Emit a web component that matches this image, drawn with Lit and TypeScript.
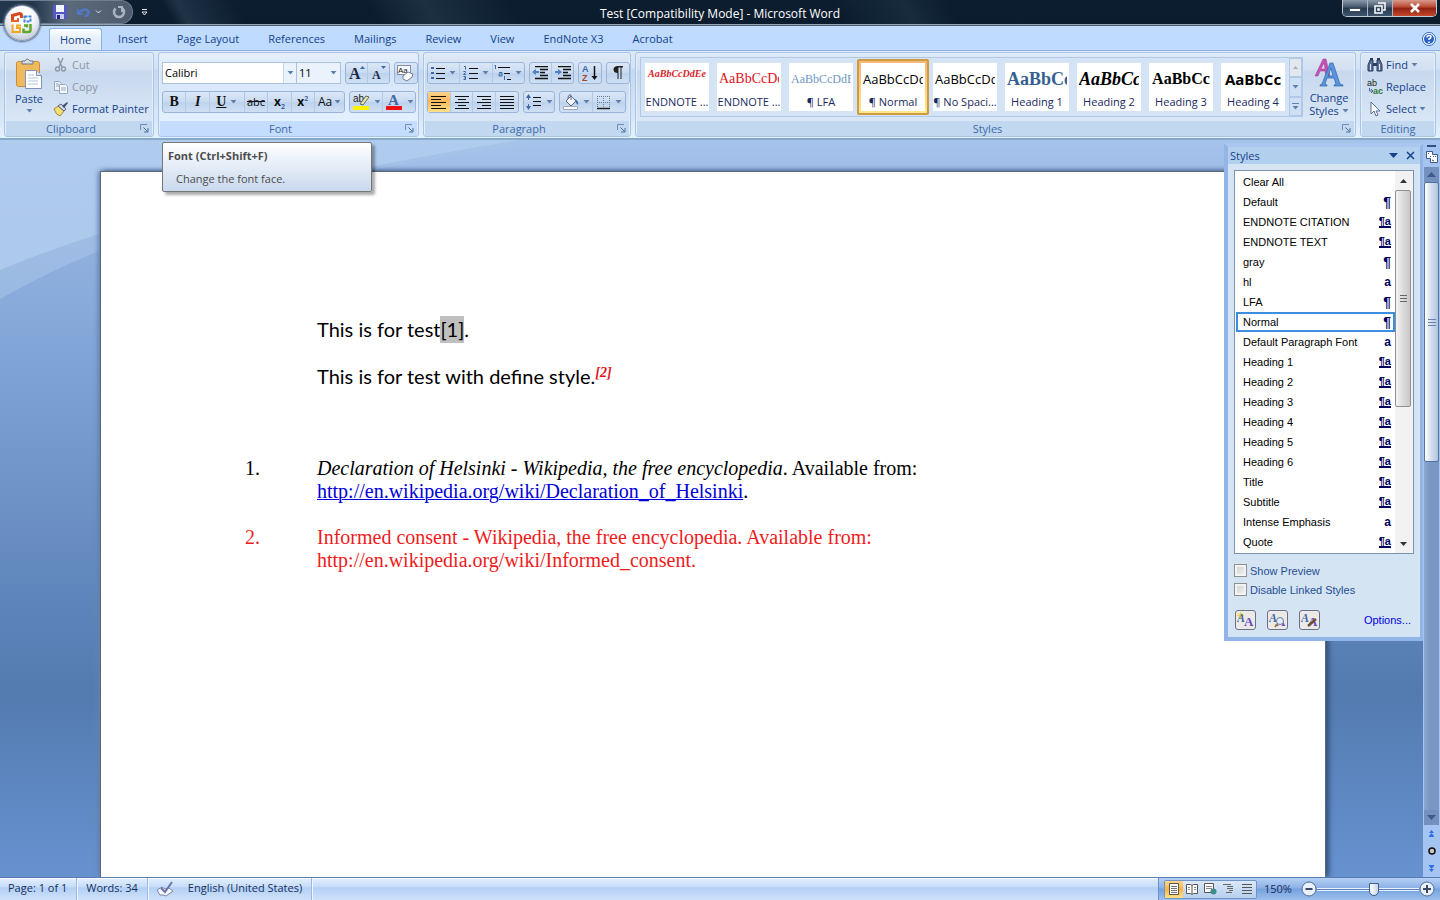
import { LitElement, html, css, svg, nothing } from "lit";
import { customElement, state } from "lit/decorators.js";
import { classMap } from "lit/directives/class-map.js";

const icon = (w: number, h: number, body: unknown) =>
  html`<svg class="icon" width=${w} height=${h} viewBox="0 0 ${w} ${h}" aria-hidden="true">${body}</svg>`;

const caret = icon(7, 4, svg`<path d="M0.500 0h6L3.500 3.500z" fill="#5f7fae"/>`);
const launcher = icon(9, 9, svg`<path d="M0.500 6V0.500H7" fill="none" stroke="#6f8db8"/><path d="M3.500 3.500l4 4M8 4v4H4" fill="none" stroke="#4d6c9c"/>`);

const lines = (rows: [number, number][], h = 14) =>
  icon(16, h, rows.map(([x, w], i) => svg`<path d="M${x} ${i * 3 + 1}.5h${w}" stroke="#111"/>`));

const icons = {
  office: icon(26, 26, svg`
    <path d="M3.500 11V5.500l7-2q2 0 2 2V8" fill="none" stroke="#d9471c" stroke-width="3"/>
    <path d="M2 11h7V8" fill="none" stroke="#e8642a" stroke-width="2"/>
    <path d="M3.500 14.500V22H11v-4H8v-2.500h4" fill="none" stroke="#f0a81e" stroke-width="2"/>
    <path d="M15.500 6.500h6v5h-6z" fill="none" stroke="#3f86d6" stroke-width="2" stroke-dasharray="3 1"/>
    <path d="M15 15.500h3v2M21.500 14v6q0 2-2 2h-5v-3.500" fill="none" stroke="#5fa62c" stroke-width="2.500"/>`),
  save: icon(14, 14, svg`<path d="M0 0h14v14H1.500L0 12.500z" fill="#5558c4"/><path d="M3 0h8v7H3z" fill="#f3f5ff"/><path d="M3 9h8v5H3z" fill="#c9cdf2"/><path d="M4 10h3v4H4z" fill="#25286f"/>`),
  undo: icon(13, 13, svg`<path d="M3 5.500q6-4 8.500 0 0.500 4-4 5" fill="none" stroke="#5078c8" stroke-width="2.500"/><path d="M0 2v7h6z" fill="#5078c8"/>`),
  redo: icon(14, 14, svg`<path d="M3.500 3.500a5 5 0 1 0 7 0" fill="none" stroke="#a9b4c1" stroke-width="2.500"/><path d="M6 1h5v6H9V3H6z" fill="#a9b4c1"/>`),
  paste: icon(28, 31, svg`
    <rect x="1.500" y="3.500" width="23" height="25" rx="2" fill="#f0b95c" stroke="#c98b35"/>
    <path d="M7 6V3h3q2-4 5 0h3v3z" fill="#d9dde4" stroke="#6d7686"/>
    <path d="M10.500 12.500h11l5 5v13h-16z" fill="#fff" stroke="#7d93bb"/><path d="M21.500 12.500v5h5" fill="#d9e4f6" stroke="#7d93bb"/>
    <path d="M13 17h6M13 20h10M13 23h10M13 26h10" stroke="#b4c4de"/>`),
  cut: icon(16, 16, svg`<path d="M5 1l4 9M10 1L6 10" stroke="#8e99a9" stroke-width="1.500"/><circle cx="4.500" cy="12" r="2" fill="none" stroke="#8e99a9" stroke-width="1.500"/><circle cx="10.500" cy="12" r="2" fill="none" stroke="#8e99a9" stroke-width="1.500"/>`),
  copy: icon(16, 16, svg`<path d="M1.500 2.500h5l2 2v7h-7z" fill="#eef3fa" stroke="#98a8bf"/><path d="M6.500 5.500h6l2 2v7h-8z" fill="#f6f9fd" stroke="#98a8bf"/><path d="M3 5h3M3 7h3M8 9h5M8 11h5" stroke="#98a8bf"/>`),
  painter: icon(16, 16, svg`<path d="M1 8l4-3 6 5-4 5q-4-1-6-7z" fill="#f4dd73" stroke="#a48a34"/><path d="M5 5l3-2 5 5-2 2z" fill="#d6d9e6" stroke="#5b5f7c"/><path d="M9 5l5-4 1 1-4 5z" fill="#4b4f78"/>`),
  grow: icon(18, 18, svg`<text x="1" y="15" font-size="16" class="gb">A</text><path d="M12 5l2.500-3L17 5z" fill="#3f68a8"/>`),
  shrink: icon(18, 18, svg`<text x="2" y="15" font-size="12" class="gb">A</text><path d="M11 2h5l-2.500 3z" fill="#3f68a8"/>`),
  clear: icon(18, 18, svg`<rect x="0.500" y="1.500" width="13" height="9" fill="#f7f9fc" stroke="#8290a8"/><text x="1" y="9" font-size="8" class="gs">Aa</text><path d="M6 12l5-4 5 2-1 3-5 4-4-2z" fill="#fbfbfd" stroke="#777f91"/>`),
  highlight: icon(18, 18, svg`<text x="1" y="9" font-size="10" class="gs">ab</text><path d="M8 11l6-8 3 1-6 8z" fill="#e9e3b4" stroke="#646a50"/><path d="M1 13h16v4H1z" fill="#fff200"/>`),
  fontColor: icon(18, 18, svg`<text x="3" y="12" font-size="15" class="gb blue">A</text><path d="M1 13h16v4H1z" fill="#ef1111"/>`),
  bullets: icon(14, 14, svg`<path d="M0 1h3v2H0zM0 6h3v2H0zM0 11h3v2H0z" fill="#3f68a8"/><path d="M5 2.500h9M5 7.500h9M5 12.500h9" stroke="#111"/>`),
  numbers: icon(15, 14, svg`<path d="M1 0.500h1.500v3M0.500 5.500h2v1l-2 2h2.500M0.500 10.500h2v3h-2M1 12h1.500" fill="none" stroke="#3f68a8"/><path d="M6 2.500h9M6 7.500h9M6 12.500h9" stroke="#111"/>`),
  levels: icon(17, 16, svg`<path d="M1.500 0v4M0.500 0.500h1.500M5 7.500h3v3.500h-3v-2h3M10.500 11v4" fill="none" stroke="#3f68a8"/><path d="M4 2.500h12M10 8.500h6M13 14.500h4" stroke="#111"/>`),
  outdent: icon(17, 14, svg`<path d="M0 6l4-3v2h3v2H4v2z" fill="#4f7fc4"/><path d="M3 0.500h13M8 3.500h8M8 6.500h5M8 9.500h8M3 12.500h13" stroke="#111" stroke-width="1.500"/>`),
  indent: icon(17, 14, svg`<path d="M7 6L3 3v2H0v2h3v2z" fill="#4f7fc4"/><path d="M3 0.500h13M8 3.500h8M8 6.500h5M8 9.500h8M3 12.500h13" stroke="#111" stroke-width="1.500"/>`),
  sort: icon(16, 16, svg`<text x="0" y="7" font-size="9" class="gs blue bold">A</text><text x="0" y="16" font-size="9" class="gs rust bold">Z</text><path d="M12.500 1v12" stroke="#111" stroke-width="1.500"/><path d="M9.500 11h6l-3 4z" fill="#111"/>`),
  pilcrow: icon(12, 14, svg`<path d="M5 0h6v1.500H5z" fill="#222"/><path d="M6 0v7Q1.500 7 1.500 3.500T6 0z" fill="#222"/><path d="M6 1v12M9 1v12" stroke="#222"/>`),
  left: lines([[0, 15], [0, 10], [0, 15], [0, 10], [0, 15]], 15),
  center: lines([[1, 14], [4, 8], [1, 14], [4, 8], [1, 14]], 15),
  right: lines([[1, 14], [6, 9], [1, 14], [6, 9], [1, 14]], 15),
  justify: lines([[1, 14], [1, 14], [1, 14], [1, 14], [1, 14]], 15),
  spacing: icon(16, 16, svg`<path d="M2.500 2v4M2.500 10v4" stroke="#3f68a8"/><path d="M0 4l2.500-4L5 4zM0 12l2.500 4L5 12z" fill="#3f68a8"/><path d="M7 3.500h8M7 7.500h8M7 11.500h8" stroke="#111"/>`),
  shading: icon(17, 16, svg`<path d="M4 7l5-5 5 5-5 5z" fill="#f5f7fb" stroke="#5a6a8a"/><path d="M6 5q0-5 3-4v5" fill="none" stroke="#5a6a8a"/><path d="M13 5q4 2 3 6l-2-2z" fill="#3f68a8"/><path d="M1.500 12.500h14v3h-14z" fill="#fff" stroke="#9aa9c0"/>`),
  borders: icon(15, 15, svg`<path d="M1.500 1v12M7.500 1v12M13.500 1v12M1 1.500h12M1 7.500h12" stroke="#6a7c9c" stroke-dasharray="1 1"/><path d="M1 13.500h13" stroke="#222" stroke-width="1.500"/>`),
  change: icon(30, 29, svg`<path d="M1 18L9 1h3l4 17h-4l-1-5H6l-2 5zM7 11h4l-1-6z" fill="#c94fb4" stroke="#96408c" stroke-width="0.500" fill-rule="evenodd"/><path d="M6 27l2-1L16 5h3l7 21 3 1v1h-9v-1l2-1-2-6h-7l-2 6 2 1v1H6zM14 18h5l-2-8z" fill="#5a94dc" stroke="#2f64ae" stroke-width="0.700" fill-rule="evenodd"/>`),
  find: icon(16, 16, svg`<path d="M1 8l2-5h3v11H1zM15 8l-2-5h-3v11h5z" fill="#5d7196" stroke="#2b3c63"/><path d="M6 6h4v3H6zM3 1h3v2H3zM10 1h3v2h-3z" fill="#2b3c63"/><path d="M3.500 7v6M12.500 7v6" stroke="#d9e4f6"/>`),
  replace: icon(16, 16, svg`<text x="0" y="7" font-size="9" class="gs">ab</text><path d="M2.500 9v3h3M4 10l2 2-2 2" fill="none" stroke="#3f68a8"/><text x="6" y="15" font-size="9" class="gs green bold">ac</text>`),
  select: icon(16, 16, svg`<path d="M4 1v12l3-3 2 5 2-1-2-4h4z" fill="#fff" stroke="#5b6f94"/>`),
  help: icon(14, 14, svg`<circle cx="7" cy="7" r="6.500" fill="#fff" stroke="#3565b8"/><circle cx="7" cy="7" r="5" fill="#2b62c9"/><path d="M5 5.500q0-2 2-2t2 1.500q0 1-2 2v1M7 9.500v1.500" fill="none" stroke="#fff" stroke-width="1.500"/>`),
  proof: icon(18, 16, svg`<path d="M1 9l5-3 3 2 4-1 4 3-7 5-3-1-3 0z" fill="#f3f5fa" stroke="#7c88a6"/><path d="M5 7l4 4 7-10" fill="none" stroke="#6674a8" stroke-width="2"/>`),
  ruler: icon(12, 12, svg`<path d="M0.500 0.500h6v3h5v8h-7v-4h-4z" fill="#fff" stroke="#3c5a8c"/><path d="M2 2.500h1M4 5.500h1M7 5.500h1M9 5.500h1M6 9l2 1" stroke="#3c5a8c"/>`),
};

const tabs = ["Home", "Insert", "Page Layout", "References", "Mailings", "Review", "View", "EndNote X3", "Acrobat"];

const gallery = [
  { cls: "p-cite", sample: "AaBbCcDdEe", name: "ENDNOTE ..." },
  { cls: "p-note", sample: "AaBbCcDd", name: "ENDNOTE ..." },
  { cls: "p-lfa", sample: "AaBbCcDdEe", name: "¶ LFA" },
  { cls: "p-normal", sample: "AaBbCcDd", name: "¶ Normal", on: true },
  { cls: "p-normal", sample: "AaBbCcDd", name: "¶ No Spaci..." },
  { cls: "p-h1", sample: "AaBbCc", name: "Heading 1" },
  { cls: "p-h2", sample: "AaBbCc", name: "Heading 2" },
  { cls: "p-h3", sample: "AaBbCc", name: "Heading 3" },
  { cls: "p-h4", sample: "AaBbCc", name: "Heading 4" },
];

type Kind = "" | "p" | "l" | "c";
const styleList: [string, Kind][] = [
  ["Clear All", ""], ["Default", "p"], ["ENDNOTE CITATION", "l"], ["ENDNOTE TEXT", "l"], ["gray", "p"], ["hl", "c"],
  ["LFA", "p"], ["Normal", "p"], ["Default Paragraph Font", "c"], ["Heading 1", "l"], ["Heading 2", "l"], ["Heading 3", "l"],
  ["Heading 4", "l"], ["Heading 5", "l"], ["Heading 6", "l"], ["Title", "l"], ["Subtitle", "l"], ["Intense Emphasis", "c"], ["Quote", "l"],
];
const marks = { "": "", p: "¶", l: "¶a", c: "a" };

@customElement("app-root")
export class AppRoot extends LitElement {
  @state() private current = "Normal";

  static styles = css`
    :host { display: flex; flex-direction: column; height: 100vh; overflow: hidden; font: 11px/16px "Open Sans", "Noto Sans", sans-serif; color: #15428b; position: relative; }
    * { box-sizing: border-box; }
    button, input, select { font: inherit; color: inherit; margin: 0; }
    button { background: none; border: 0; padding: 0; display: flex; align-items: center; justify-content: center; white-space: nowrap; }
    .icon { display: block; flex: none; }
    .gb { font-family: "Liberation Serif", serif; font-weight: bold; fill: #1d2b45; }
    .gs { font-family: "Liberation Sans", sans-serif; fill: #222; }
    .bold { font-weight: bold; }
    .blue { fill: #3f68a8; }
    .violet { fill: #6a4ac0; }
    .rust { fill: #a8452c; }
    .green { fill: #2d7a34; }

    .titlebar { display: grid; grid-template-columns: 1fr auto 1fr; height: 26px; flex: none; color: #fff; font-size: 12px; border-bottom: 2px ridge #8ea5bb;
      background: linear-gradient(60deg, transparent 0 12%, #1f3346 13%, transparent 17%, transparent 26%, #1c3042 30%, transparent 36%, transparent 58%, #172b3d 63%, transparent 66%), linear-gradient(#0c1d2f, #0a1c2e); }
    .titlebar h1 { font: inherit; margin: 0; line-height: 27px; }
    .quick { display: flex; align-items: flex-start; gap: 8px; }
    .pill { display: flex; align-items: center; gap: 10px; height: 24px; width: 133px; padding-left: 53px; border-radius: 0 12px 12px 0; background: linear-gradient(90deg, #22374b 25%, #5c6a7c 50%, #4d5b6d); border: 1px solid #6f7f92; border-left: 0; }
    .quick > button { height: 25px; }
    .pill button:nth-child(2) { gap: 5px; }
    .window { justify-self: end; display: flex; height: 17px; margin-right: 3px; border: 1px solid #c0cbd6; border-top: 0; border-radius: 0 0 5px 5px; overflow: hidden; }
    .window button { width: 25px; background: linear-gradient(#8b99aa, #44566b 45%, #24384e 50%, #3d556e); border-right: 1px solid #a8b6c4; }
    .window .close { width: 43px; border: 0; background: linear-gradient(#d99a8b, #b8452f 45%, #8f2011 50%, #c5492b); }
    .orb { position: absolute; left: 4px; top: 5px; width: 36px; height: 36px; border-radius: 50%; border: 1px solid #8b9bb2; background: radial-gradient(circle at 50% 30%, #fff 30%, #dfe4ec 60%, #aab6c8); box-shadow: 0 0 2px 1px #51637a; z-index: 2; }

    .tabs { display: flex; gap: 1px; height: 24px; flex: none; padding: 2px 4px 0 49px; background: #bfdbff; }
    .tabs button { padding: 0 14px; }
    .tabs .on { border: 1px solid #8db2e3; border-bottom: 0; border-radius: 3px 3px 0 0; background: linear-gradient(#fff, #e8f1fb 40%, #dfeaf8); padding: 0 10px; margin-right: 1px; }
    .tabs .help { margin-left: auto; padding: 0; }

    .ribbon { display: flex; gap: 4px; flex: none; padding: 1px 4px; height: 90px; background: linear-gradient(#dce9f8, #d3e3f5 20%, #c6d9ef 22%, #d9e8f8 80%, #e3f1ff); border-top: 1px solid #8db2e3; border-bottom: 2px solid #86a9c9; }
    .group { display: flex; flex-direction: column; border: 1px solid #a9c4e4; border-radius: 3px; box-shadow: inset 0 0 0 1px #e2eefb; background: linear-gradient(#dee9f6, #d3e0f1 20%, #c8d8ed 22%, #d8e6f6 80%); }
    .group.hot { background: linear-gradient(#e6f0fc, #dce9f9 20%, #d4e4f8 22%, #e2f0ff 80%); }
    .group.hot footer { background: #c4ddfe; }
    .group.grow { flex: 1; min-width: 0; }
    .body { display: flex; flex: 1; min-height: 0; }
    .group footer { display: flex; height: 15px; line-height: 15px; margin: 0 1px; background: #c1d8f0; color: #3e6aaa; text-align: center; align-items: center; }
    .group footer span { flex: 1; }
    .group footer button { width: 16px; }
    .clip { width: 150px; } .font { width: 261px; } .para { width: 208px; } .edit { width: 76px; }
    .big { flex-direction: column; justify-content: flex-start; width: 48px; line-height: 12px; padding-top: 5px; gap: 4px; }
    .change { width: 52px; line-height: 13px; }
    .change .with { display: flex; align-items: center; gap: 3px; }
    .change .words { display: flex; flex-direction: column; align-items: center; }
    .stack { display: flex; flex-direction: column; justify-content: center; }
    .edit .stack { padding-left: 6px; }
    .stack button { justify-content: flex-start; gap: 3px; height: 22px; }
    .stack button:disabled { color: #8d96a6; }
    .rows { display: flex; flex-direction: column; gap: 7px; padding: 9px 3px 0; }
    .row { display: flex; gap: 4px; height: 22px; }
    .set { display: flex; border: 1px solid #9bb5d8; border-radius: 3px; background: linear-gradient(#dae7f7, #c9daf0 50%, #bdd2ed 52%, #cfe0f5); }
    .set button { min-width: 22px; gap: 4px; color: #111; border-right: 1px solid #b4c9e6; flex: 1; font-size: 12px; }
    .set button:last-child { border: 0; }
    .set .serif { font-family: "Liberation Serif", serif; font-weight: bold; font-size: 14px; }
    .set .it { font-style: italic; }
    .set .un span { text-decoration: underline; }
    .set .st { font-size: 11px; text-decoration: line-through; }
    .set .on { background: linear-gradient(#fbd38b, #fcb95a 45%, #ffe18a); }
    .w24 { width: 24px; } .w32 { width: 32px; } .w44 { width: 45px; } .w67 { width: 67px; } .w92 { width: 92px; } .w98 { width: 98px; } .w183 { width: 183px; }
    .set .wide { flex: 0 0 35px; }
    .set .mid { flex: 0 0 29px; gap: 2px; }
    .set sub, .set sup { font-size: 7px; color: #3f68a8; line-height: 0; }
    .combos { display: flex; }
    .combo { display: grid; border: 1px solid #abc1de; background: #fff; color: #000; }
    .combo > * { grid-area: 1 / 1; }
    .combo select { appearance: none; border: 0; background: none; padding: 0 2px; outline: 0; min-width: 0; }
    .combo .drop { justify-self: end; width: 13px; display: grid; place-items: center; border-left: 1px solid #c5d7ef; background: #eaf2fb; pointer-events: none; }
    .cname { width: 135px; }
    .csize { width: 44px; border-left: 0; background: #eaf2fb; }
    .csize .drop { border: 0; }

    .gallery { display: flex; flex: 1; min-width: 0; margin: 4px 0 4px 4px; border: 1px solid #b0c9e8; background: #d4e4f5; }
    .card { flex: 0 0 72px; flex-direction: column; padding: 5px 4px; color: #00004d; }
    .card > span { display: block; width: 64px; height: 24px; background: #fff; overflow: hidden; text-align: center; line-height: 30px; border: 0 solid #fff; border-width: 0 2px; }
    .card > .name { line-height: 30px; color: #1a2a5e; border-width: 0; }
    .card.on { border: 2px solid #cf9a43; border-radius: 2px; padding: 2px; background: linear-gradient(#f3b877, #ffe88a); margin: 1px 0; }
    .card > .p-cite { font: italic bold 10px/22px "Liberation Serif", serif; color: #d8232a; }
    .card > .p-note { font: 14px/32px "Liberation Serif", serif; color: #e0131b; }
    .card > .p-lfa { font: 12px/32px "Liberation Serif", serif; color: #6f97c6; }
    .card > .p-normal { font-size: 13px; line-height: 32px; color: #000; }
    .card > .p-h1 { font: bold 18px/32px "Liberation Serif", serif; color: #365f91; }
    .card > .p-h2 { font: italic bold 18px/32px "Liberation Serif", serif; color: #000; }
    .card > .p-h3 { font: bold 16px/32px "Liberation Serif", serif; color: #000; }
    .card > .p-h4 { font-weight: bold; font-size: 15px; line-height: 32px; color: #000; }
    .steps { display: flex; flex-direction: column; width: 14px; margin-left: auto; }
    .steps button { flex: 1; border: 1px solid #b0c9e8; background: #cfe0f4; }
    .steps button:disabled { background: #e3e8ee; }

    .workspace { flex: 1; min-height: 0; display: flex; position: relative; background: linear-gradient(#a6c3ec, #96b5e1 10%, #86a9da 24%, #7398cb 42%, #5f86bc 62%, #537bb0 75%, #6792d0); }
    .swoosh { position: absolute; left: 0; top: 0; }
    .desk { flex: 1; min-width: 0; padding: 31px 97px 0 100px; position: relative; display: flex; overflow: hidden; }
    .page { flex: 1; min-width: 0; background: #fff; border: 1px solid #5d6878; border-bottom: 0; box-shadow: 3px 0 5px #33507c, -2px 0 5px #6686b3; padding: 144px 216px 0 144px; color: #000; }
    .page p { margin: 0 0 20px 72px; font: 20px/27px Lato, sans-serif; }
    .page mark { background: #c0c0c0; color: inherit; display: inline-block; }
    .page sup { font: italic bold 14px/0 "Liberation Serif", serif; color: #e0131b; vertical-align: 7px; }
    .refs { margin: 67px 0 0; font: 20px/23px "Liberation Serif", serif; display: grid; grid-template-columns: 72px 1fr; row-gap: 23px; }
    .refs dt, .refs dd { margin: 0; }
    .refs .red { color: #ee1c1c; }
    .refs a { color: #0000d8; text-decoration-thickness: 1px; }

    .tip { position: absolute; left: 162px; top: 2px; width: 210px; height: 50px; padding: 5px; border: 1px solid #767676; border-radius: 2px; background: linear-gradient(#fff, #c9d9ee); box-shadow: 3px 3px 3px #00000055; color: #4c4c4c; line-height: 16px; z-index: 3; }
    .tip strong { display: block; margin-bottom: 7px; }
    .tip span { padding-left: 8px; }

    .pane { position: absolute; right: 17px; top: 3px; width: 199px; border: 4px solid #93b4e6; border-top-color: #a9c7ef; border-right-width: 3px; background: #d5e4f2; font: 11px/20px "Liberation Sans", sans-serif; z-index: 2; }
    .pane header { display: flex; align-items: center; height: 17px; padding: 0 5px 0 2px; background: #b3cfee; gap: 8px; font-family: "Open Sans", sans-serif; }
    .pane header span { margin-right: auto; }
    .listbox { display: flex; height: 384px; margin: 6px 6px 0; border: 1px solid #7c93ad; background: #fff; color: #000; }
    .list { flex: 1; min-width: 0; overflow: hidden; padding: 1px 0 0 1px; }
    .list button { width: 100%; height: 20px; padding: 0 2px 0 5px; justify-content: space-between; border: 2px solid transparent; }
    .list .on { border-color: #3d8de0; }
    .kind { font: bold 12px/12px "Liberation Sans", sans-serif; color: #00005c; }
    .kind.l { border-bottom: 2px solid #00005c; line-height: 9px; font-size: 11px; }
    .kind.p { font-size: 14px; }
    .bar { width: 18px; padding-right: 2px; display: flex; flex-direction: column; background: #f2f2f2; }
    .bar i { display: grid; place-items: center; height: 19px; }
    .bar b { height: 217px; border: 1px solid #8f8f8f; border-radius: 2px; background: linear-gradient(90deg, #f5f5f5, #dcdcdc 50%, #c8c8c8); display: grid; place-items: center; }
    .bar i:last-child { margin-top: auto; }
    .checks { padding: 7px 6px 0; color: #1f4e94; }
    .checks label { display: flex; align-items: center; gap: 3px; height: 19px; }
    .checks input { appearance: none; width: 13px; height: 13px; border: 1px solid #8d8f91; background: linear-gradient(135deg, #c9ccd0, #f6f6f6); box-shadow: inset 0 0 0 2px #f4f4f4; }
    .tools { display: flex; gap: 11px; padding: 11px 9px 7px 7px; align-items: center; }
    .tools button { width: 21px; height: 20px; border: 1px solid #6b6f8b; border-radius: 3px; background: #eceae6; }
    .tools a { margin-left: auto; color: #0000e0; text-decoration: none; }

    .vscroll { width: 17px; flex: none; display: flex; flex-direction: column; align-items: center; background: #a6c4f2; padding-top: 5px; }
    .vscroll .split { width: 9px; height: 2px; background: #33507e; margin-bottom: 4px; }
    .vscroll .rule { margin-bottom: 4px; }
    .rail { flex: 1; min-height: 0; align-self: stretch; margin: 0 1px; display: flex; flex-direction: column; background: linear-gradient(90deg, #8fa9d0, #7896c4 40%, #7a97c4); }
    .rail button { height: 15px; background: #7390bf; }
    .rail b { height: 280px; border: 1px solid #54709d; border-radius: 2px; background: linear-gradient(90deg, #fff, #d5e0f0 45%, #b2c4e0); display: grid; place-items: center; }
    .rail button:last-child { margin-top: auto; }
    .browse { height: 52px; display: flex; flex-direction: column; justify-content: space-around; align-items: center; }

    .status { display: flex; height: 23px; flex: none; color: #15305f; border-top: 1px solid #567db0; background: linear-gradient(#e3efff, #c7dcf9 40%, #b3d0f5 45%, #cfe2fb); box-shadow: inset 0 1px 0 #fff; line-height: 20px; }
    .status > span, .status > button { padding: 0 9px; border-right: 1px solid #9ab8e0; box-shadow: 1px 0 0 #f0f7ff; }
    .status > span:first-child { padding-left: 8px; }
    .status > .lang { padding-left: 0; }
    .status > .check { border: 0; box-shadow: none; padding: 0 14px 0 8px; }
    .zoom { display: flex; align-items: center; margin-left: auto; padding: 0 5px; border-left: 1px solid #6a94cf; background: linear-gradient(#b5d0f5, #8db2e6 45%, #76a1dd 50%, #9cc0ee); }
    .views { display: flex; height: 19px; width: 93px; border: 1px solid #6f94c8; border-radius: 2px; background: linear-gradient(#dbe8f9, #b7cfee); margin-right: 7px; }
    .views button { flex: 1; }
    .views .on { background: linear-gradient(#ffd68c, #fdb53f 50%, #ffe18a); }
    .zoom label { width: 37px; }
    .zoom input { appearance: none; flex: none; width: 102px; height: 18px; background: linear-gradient(#5a80b5, #5a80b5) center / 100% 1px no-repeat, linear-gradient(#e8f2ff, #e8f2ff) center / 100% 3px no-repeat; }
    .zoom input::-webkit-slider-thumb { appearance: none; width: 10px; height: 13px; border: 1px solid #3f5f92; background: linear-gradient(90deg, #fff, #c7d6ea); border-radius: 1px 1px 5px 5px; }
  `;

  private group(label: string, cls: string, body: unknown, launch = true) {
    return html`<section class="group ${cls}"><div class="body">${body}</div>
      <footer><span>${label}</span>${launch ? html`<button aria-label="${label} dialog">${launcher}</button>` : nothing}</footer></section>`;
  }

  private galleryCard(g: (typeof gallery)[number]) {
    return html`<button class=${classMap({ card: true, on: !!g.on })}><span class=${g.cls}>${g.sample}</span><span class="name">${g.name}</span></button>`;
  }

  private ribbon() {
    return html`<div class="ribbon">
      ${this.group("Clipboard", "clip", html`
        <button class="big">${icons.paste}<span>Paste</span>${caret}</button>
        <div class="stack">
          <button disabled>${icons.cut}Cut</button><button disabled>${icons.copy}Copy</button><button>${icons.painter}Format Painter</button>
        </div>`)}
      ${this.group("Font", "font hot", html`<div class="rows">
        <div class="row">
          <div class="combos">
            <div class="combo cname"><select aria-label="Font"><option>Calibri</option></select><span class="drop">${caret}</span></div>
            <div class="combo csize"><select aria-label="Font size"><option>11</option></select><span class="drop">${caret}</span></div>
          </div>
          <div class="set w44"><button aria-label="Grow font">${icons.grow}</button><button aria-label="Shrink font">${icons.shrink}</button></div>
          <div class="set w24"><button aria-label="Clear formatting">${icons.clear}</button></div>
        </div>
        <div class="row">
          <div class="set w183">
            <button class="serif">B</button><button class="serif it">I</button><button class="serif un wide"><span>U</span>${caret}</button>
            <button class="st">abc</button><button class="bold"><span>x<sub>2</sub></span></button><button class="bold"><span>x<sup>2</sup></span></button>
            <button class="mid">Aa${caret}</button>
          </div>
          <div class="set w67"><button aria-label="Highlight">${icons.highlight}${caret}</button><button aria-label="Font color">${icons.fontColor}${caret}</button></div>
        </div></div>`)}
      ${this.group("Paragraph", "para", html`<div class="rows">
        <div class="row">
          <div class="set w98"><button aria-label="Bullets">${icons.bullets}${caret}</button><button aria-label="Numbering">${icons.numbers}${caret}</button><button aria-label="Multilevel list">${icons.levels}${caret}</button></div>
          <div class="set w44"><button aria-label="Decrease indent">${icons.outdent}</button><button aria-label="Increase indent">${icons.indent}</button></div>
          <div class="set w24"><button aria-label="Sort">${icons.sort}</button></div>
          <div class="set w24"><button aria-label="Show marks">${icons.pilcrow}</button></div>
        </div>
        <div class="row">
          <div class="set w92"><button class="on" aria-label="Align left">${icons.left}</button><button aria-label="Center">${icons.center}</button><button aria-label="Align right">${icons.right}</button><button aria-label="Justify">${icons.justify}</button></div>
          <div class="set w32"><button aria-label="Line spacing">${icons.spacing}${caret}</button></div>
          <div class="set w67"><button aria-label="Shading">${icons.shading}${caret}</button><button aria-label="Borders">${icons.borders}${caret}</button></div>
        </div></div>`)}
      ${this.group("Styles", "grow", html`
        <div class="gallery">${gallery.map((g) => this.galleryCard(g))}
          <div class="steps">
            <button disabled aria-label="Previous row">${icon(5, 3, svg`<path d="M0 3h5L2.500 0z" fill="#a5adb8"/>`)}</button>
            <button aria-label="Next row">${caret}</button>
            <button aria-label="More">${icon(7, 7, svg`<path d="M0 0.500h7" stroke="#5f7fae"/><path d="M0.500 3h6L3.500 6.500z" fill="#5f7fae"/>`)}</button>
          </div>
        </div>
        <button class="big change">${icons.change}<span class="words"><span>Change</span><span class="with">Styles${caret}</span></span></button>`)}
      ${this.group("Editing", "edit", html`<div class="stack">
        <button>${icons.find}<span>Find</span>${caret}</button><button>${icons.replace}<span>Replace</span></button><button>${icons.select}<span>Select</span>${caret}</button></div>`, false)}
    </div>`;
  }

  private stylePane() {
    const aa = svg`<text x="0" y="10" font-size="12" font-style="italic" class="gb blue">A</text><text x="7" y="14" font-size="13" class="gb violet">A</text>`;
    return html`<aside class="pane">
      <header><span>Styles</span>
        <button aria-label="Pane menu">${icon(9, 5, svg`<path d="M0 0h9L4.500 5z" fill="#15428b"/>`)}</button>
        <button aria-label="Close pane">${icon(9, 9, svg`<path d="M1 1l7 7M8 1L1 8" stroke="#15428b" stroke-width="1.500"/>`)}</button></header>
      <div class="listbox">
        <div class="list">${styleList.map(([n, k]) => html`<button class=${classMap({ on: n === this.current })} @click=${() => (this.current = n)}><span>${n}</span>${k ? html`<span class="kind ${k}">${marks[k]}</span>` : nothing}</button>`)}</div>
        <div class="bar"><i>${icon(7, 4, svg`<path d="M0 4h7L3.500 0z" fill="#333"/>`)}</i><b>${icon(7, 9, svg`<path d="M0 1.500h7M0 4.500h7M0 7.500h7" stroke="#666"/>`)}</b><i>${icon(7, 4, svg`<path d="M0 0h7L3.500 4z" fill="#333"/>`)}</i></div>
      </div>
      <div class="checks"><label><input type="checkbox">Show Preview</label><label><input type="checkbox">Disable Linked Styles</label></div>
      <div class="tools">
        <button aria-label="New style">${icon(17, 16, svg`<path d="M1 1l5 5M6 1L1 6M3.500 0v7M0 3.500h7" stroke="#efd23c"/>${aa}`)}</button>
        <button aria-label="Style inspector">${icon(17, 16, svg`${aa}<circle cx="11" cy="9" r="3.500" fill="#e6eefb" stroke="#6b7aa0"/><path d="M8 12l-2 3" stroke="#a27a3c" stroke-width="2"/>`)}</button>
        <button aria-label="Manage styles">${icon(17, 16, svg`${aa}<path d="M7 14l8-7" stroke="#6b5138" stroke-width="2.500"/>`)}</button>
        <a href="#options">Options...</a>
      </div>
    </aside>`;
  }

  render() {
    const double = (d: string) => icon(9, 9, svg`<path d=${d} fill="#2f6fe0"/>`);
    return html`
      <div class="titlebar">
        <div class="quick">
          <div class="pill"><button aria-label="Save">${icons.save}</button>
            <button aria-label="Undo">${icons.undo}${icon(7, 4, svg`<path d="M1 0.500l2.500 2.500L6 0.500" fill="none" stroke="#dfe6ee"/>`)}</button>
            <button aria-label="Redo">${icons.redo}</button></div>
          <button aria-label="Customize">${icon(7, 7, svg`<path d="M1 0.500h5" stroke="#dfe6ee"/><path d="M1 3h5L3.500 6z" fill="none" stroke="#dfe6ee"/>`)}</button>
        </div>
        <h1>Test [Compatibility Mode] - Microsoft Word</h1>
        <div class="window">
          <button aria-label="Minimize">${icon(12, 8, svg`<path d="M0.500 4.500h11v3h-11z" fill="#fff" stroke="#394a5e"/>`)}</button>
          <button aria-label="Restore">${icon(12, 12, svg`<path d="M4 1h7v7H9M1 4h7v7H1zM4 7h1v1H4z" fill="none" stroke="#fff" stroke-width="1.500"/>`)}</button>
          <button class="close" aria-label="Close">${icon(12, 10, svg`<path d="M2 1l8 8M10 1L2 9" stroke="#fff" stroke-width="2.500"/>`)}</button>
        </div>
      </div>
      <button class="orb" aria-label="Office menu">${icons.office}</button>
      <nav class="tabs">${tabs.map((t, i) => html`<button class=${i ? "" : "on"}>${t}</button>`)}<button class="help" aria-label="Help">${icons.help}</button></nav>
      ${this.ribbon()}
      <main class="workspace">
        <svg class="swoosh" width="600" height="170" viewBox="0 0 600 170" aria-hidden="true">
          <path d="M0 159Q200 45 560 0H0z" fill="#a7c3e8" opacity="0.600"/><path d="M0 130Q180 55 520 0H0z" fill="#b4cfef" opacity="0.700"/>
        </svg>
        <div class="desk">
          <article class="page">
            <p>This is for test<mark>[1]</mark>.</p>
            <p>This is for test with define style.<sup>[2]</sup></p>
            <dl class="refs">
              <dt>1.</dt><dd><em>Declaration of Helsinki - Wikipedia, the free encyclopedia</em>. Available from:<br><a href="#helsinki">http://en.wikipedia.org/wiki/Declaration_of_Helsinki</a>.</dd>
              <dt class="red">2.</dt><dd class="red">Informed consent - Wikipedia, the free encyclopedia. Available from:<br>http://en.wikipedia.org/wiki/Informed_consent.</dd>
            </dl>
          </article>
        </div>
        <div class="tip" role="tooltip"><strong>Font (Ctrl+Shift+F)</strong><span>Change the font face.</span></div>
        ${this.stylePane()}
        <div class="vscroll">
          <div class="split"></div><button class="rule" aria-label="Ruler">${icons.ruler}</button>
          <div class="rail"><button aria-label="Scroll up">${icon(9, 5, svg`<path d="M0 5h9L4.500 0z" fill="#3c5a8c"/>`)}</button>
            <b>${icon(8, 9, svg`<path d="M0 1.500h8M0 4.500h8M0 7.500h8" stroke="#6a82a8"/>`)}</b>
            <button aria-label="Scroll down">${icon(9, 5, svg`<path d="M0 0h9L4.500 5z" fill="#3c5a8c"/>`)}</button></div>
          <div class="browse">
            <button aria-label="Previous page">${double("M2 4l2.500-3L7 4zM2 7l2.500-3L7 7zM2 7h5v1H2z")}</button>
            <button aria-label="Browse object">${icon(8, 8, svg`<circle cx="4" cy="4" r="3" fill="#c9c9c9" stroke="#111" stroke-width="1.500"/>`)}</button>
            <button aria-label="Next page">${double("M2 1h5v1H2zM2 2l2.500 3L7 2zM2 5l2.500 3L7 5z")}</button>
          </div>
        </div>
      </main>
      <footer class="status">
        <span>Page: 1 of 1</span><span>Words: 34</span><button class="check" aria-label="Proofing">${icons.proof}</button><span class="lang">English (United States)</span>
        <div class="zoom">
          <div class="views">
            <button class="on" aria-label="Print layout">${icon(12, 12, svg`<path d="M1.500 0.500h9v11h-9z" fill="#fff" stroke="#555"/><path d="M3 3.500h6M3 5.500h6M3 7.500h6M3 9.500h6" stroke="#777"/>`)}</button>
            <button aria-label="Reading">${icon(12, 12, svg`<path d="M0.500 1.500h4l1.500 1 1.500-1h4v9h-4L6 11.500l-1.500-1h-4zM6 2v9" fill="#fff" stroke="#555"/><path d="M2 4.500h2M2 6.500h2M8 4.500h2M8 6.500h2" stroke="#888"/>`)}</button>
            <button aria-label="Web layout">${icon(13, 12, svg`<path d="M0.500 0.500h9v9h-9z" fill="#fff" stroke="#555"/><path d="M2 3.500h6M2 5.500h6" stroke="#888"/><circle cx="9.500" cy="8.500" r="3" fill="#3d8c8c"/>`)}</button>
            <button aria-label="Outline">${icon(12, 12, svg`<path d="M0 1.500h8M4 3.500h6M4 5.500h6M6 7.500h4M3 9.500h6" stroke="#666"/>`)}</button>
            <button aria-label="Draft">${icon(12, 12, svg`<path d="M1 1.500h10M1 4.500h10M1 7.500h10M1 10.500h10" stroke="#555"/>`)}</button>
          </div>
          <label for="zoom">150%</label>
          <button aria-label="Zoom out">${icon(16, 16, svg`<circle cx="8" cy="8" r="7" fill="#e9f0fa" stroke="#4d6c9c"/><path d="M4.500 8h7" stroke="#3a4a66" stroke-width="2"/>`)}</button>
          <input id="zoom" type="range" min="0" max="100" value="56">
          <button aria-label="Zoom in">${icon(16, 16, svg`<circle cx="8" cy="8" r="7" fill="#e9f0fa" stroke="#4d6c9c"/><path d="M4 8h8M8 4v8" stroke="#3a4a66" stroke-width="2"/>`)}</button>
        </div>
      </footer>`;
  }
}
